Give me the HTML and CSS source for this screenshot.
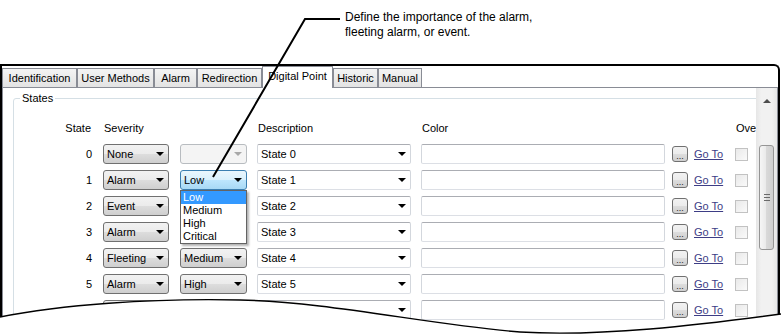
FILE: index.html
```html
<!DOCTYPE html>
<html>
<head>
    <title>Digital Point</title>
    <link rel="stylesheet" href="styles.css">
</head>
<body>
    <div class="callout">Define the importance of the alarm,<br>fleeting alarm, or event.</div>

    <div class="window">
        <div class="tabs">
            <div class="tab tab-ident">Identification</div>
            <div class="tab tab-user">User Methods</div>
            <div class="tab tab-alarm">Alarm</div>
            <div class="tab tab-redir">Redirection</div>
            <div class="tab tab-digital active">Digital Point</div>
            <div class="tab tab-historic">Historic</div>
            <div class="tab tab-manual">Manual</div>
        </div>
        <div class="panel">
            <div class="content">
                <fieldset class="group">
                    <legend>States</legend>
                    <div class="grid">
                        <div class="head num">State</div>
                        <div class="head">Severity</div>
                        <div></div>
                        <div class="head">Description</div>
                        <div class="head">Color</div>
                        <div></div>
                        <div></div>
                        <div class="head">Override</div>

                        <div class="num">0</div>
                        <div class="combo sev"><span>None</span><i class="arrow"></i></div>
                        <div class="combo pri disabled"><span></span><i class="arrow"></i></div>
                        <div class="combo desc"><span>State 0</span><i class="arrow"></i></div>
                        <div class="textbox"></div>
                        <div class="dots"><span>...</span></div>
                        <a class="link">Go To</a>
                        <span class="check"></span>

                        <div class="num">1</div>
                        <div class="combo sev"><span>Alarm</span><i class="arrow"></i></div>
                        <div class="pri-wrap">
                            <div class="combo pri focus"><span>Low</span><i class="arrow"></i></div>
                            <ul class="list">
                                <li class="selected">Low</li>
                                <li>Medium</li>
                                <li>High</li>
                                <li>Critical</li>
                            </ul>
                        </div>
                        <div class="combo desc"><span>State 1</span><i class="arrow"></i></div>
                        <div class="textbox"></div>
                        <div class="dots"><span>...</span></div>
                        <a class="link">Go To</a>
                        <span class="check"></span>

                        <!-- rows 2 and 3: priority boxes sit under the open list -->
                        <div class="num">2</div>
                        <div class="combo sev"><span>Event</span><i class="arrow"></i></div>
                        <div class="combo pri"></div>
                        <div class="combo desc"><span>State 2</span><i class="arrow"></i></div>
                        <div class="textbox"></div>
                        <div class="dots"><span>...</span></div>
                        <a class="link">Go To</a>
                        <span class="check"></span>

                        <div class="num">3</div>
                        <div class="combo sev"><span>Alarm</span><i class="arrow"></i></div>
                        <div class="combo pri"></div>
                        <div class="combo desc"><span>State 3</span><i class="arrow"></i></div>
                        <div class="textbox"></div>
                        <div class="dots"><span>...</span></div>
                        <a class="link">Go To</a>
                        <span class="check"></span>

                        <div class="num">4</div>
                        <div class="combo sev"><span>Fleeting</span><i class="arrow"></i></div>
                        <div class="combo pri"><span>Medium</span><i class="arrow"></i></div>
                        <div class="combo desc"><span>State 4</span><i class="arrow"></i></div>
                        <div class="textbox"></div>
                        <div class="dots"><span>...</span></div>
                        <a class="link">Go To</a>
                        <span class="check"></span>

                        <div class="num">5</div>
                        <div class="combo sev"><span>Alarm</span><i class="arrow"></i></div>
                        <div class="combo pri"><span>High</span><i class="arrow"></i></div>
                        <div class="combo desc"><span>State 5</span><i class="arrow"></i></div>
                        <div class="textbox"></div>
                        <div class="dots"><span>...</span></div>
                        <a class="link">Go To</a>
                        <span class="check"></span>

                        <div class="num">6</div>
                        <div class="combo sev"><span>Alarm</span><i class="arrow"></i></div>
                        <div class="combo pri"><span>Low</span><i class="arrow"></i></div>
                        <div class="combo desc"><span>State 6</span><i class="arrow"></i></div>
                        <div class="textbox"></div>
                        <div class="dots"><span>...</span></div>
                        <a class="link">Go To</a>
                        <span class="check"></span>
                    </div>
                </fieldset>
            </div>
            <div class="vscroll">
                <div class="up"><i></i></div>
                <div class="thumb"><i class="grip"></i></div>
            </div>
        </div>
    </div>

    <!-- callout line and torn bottom edge drawn over the screenshot -->
    <svg class="overlay" width="781" height="336" viewBox="0 0 781 336">
        <path d="M340,19 H305 L213,177" fill="none" stroke="#000" stroke-width="2"/>
        <path d="M0,317 C60,305 150,298 240,300 C330,302 430,325 520,332 C600,337 700,325 781,314 L781,336 L0,336 Z" fill="#fff"/>
        <path d="M0,317 C60,305 150,298 240,300 C330,302 430,325 520,332 C600,337 700,325 781,314" fill="none" stroke="#000" stroke-width="1.4"/>
    </svg>
</body>
</html>
```

FILE: styles.css
```css
body {
    margin: 0;
    width: 781px;
    height: 336px;
    position: relative;
    overflow: hidden;
    background: #fff;
    font-family: "Liberation Sans", Arial, sans-serif;
    font-size: 11px;
    color: #000;
}
.callout {
    height: 64px;
    box-sizing: border-box;
    padding: 10px 0 0 345px;
    font-size: 12px;
    line-height: 15px;
}
.window {
    width: 780px;
    height: 290px;
    box-sizing: border-box;
    border: 2px solid #000;
    border-bottom: none;
    border-top-right-radius: 6px;
    display: flex;
    flex-direction: column;
}
.tabs {
    display: flex;
    align-items: flex-end;
    height: 21px;
}
.tab {
    box-sizing: border-box;
    height: 19px;
    line-height: 18px;
    border: 1px solid #898c95;
    border-bottom: none;
    background: linear-gradient(#f4f4f4, #e3e3e3);
    text-align: center;
    white-space: nowrap;
}
.tab.active {
    height: 22px;
    line-height: 19px;
    margin-bottom: -1px;
    background: #fff;
    position: relative;
    z-index: 1;
}
.tab-ident { width: 75px; }
.tab-user { width: 77px; }
.tab-alarm { width: 43px; }
.tab-redir { width: 65px; }
.tab-digital { width: 71px; }
.tab-historic { width: 45px; }
.tab-manual { width: 44px; }
.panel {
    flex: 1;
    display: flex;
    border: 1px solid #898c95;
    background: #fff;
}
.content {
    flex: 1;
    min-width: 0;
    overflow: hidden;
    padding: 4px 0 0 10px;
}
.group {
    margin: 0;
    padding: 0;
    width: 800px;
    min-width: 0;
    height: 300px;
    box-sizing: border-box;
    border: 1px solid #d5dfe5;
    border-radius: 3px;
}
.group legend {
    margin-left: 6px;
    padding: 0 2px;
    line-height: 13px;
}
.grid {
    display: grid;
    grid-template-columns: 89px 77px 77px 164px 251px 22px 41px 60px;
    grid-auto-rows: 26px;
    align-items: center;
    margin-top: 10px;
    white-space: nowrap;
}
.head {
    padding-left: 1px;
}
.num {
    text-align: right;
    padding-right: 11px;
}
.head.num {
    padding-right: 12px;
}
.combo {
    box-sizing: border-box;
    height: 20px;
    display: flex;
    align-items: center;
    padding: 0 4px 0 3px;
    border: 1px solid #707070;
    border-radius: 3px;
    background: linear-gradient(#f2f2f2, #ebebeb 50%, #dddddd 50%, #cfcfcf);
}
.combo .arrow {
    margin-left: auto;
    border-style: solid;
    border-width: 4px 4px 0;
    border-color: #000 transparent transparent;
}
.sev { width: 66px; }
.pri { width: 67px; }
.combo.focus {
    border-color: #3c7fb1;
    background: linear-gradient(#eaf6fd, #d9f0fc 50%, #bee6fd 50%, #a7d9f5);
}
.combo.disabled {
    border-color: #b8bcc0;
    background: #f4f4f4;
}
.combo.disabled .arrow {
    border-top-color: #a8a8a8;
}
.combo.desc {
    width: 154px;
    border-radius: 2px;
    border-color: #abadb3 #d3d7dd #dcdfe5 #d3d7dd;
    background: #fff;
}
.pri-wrap {
    position: relative;
    height: 20px;
}
.list {
    position: absolute;
    top: 100%;
    left: 0;
    z-index: 2;
    width: 67px;
    box-sizing: border-box;
    margin: 0;
    padding: 0;
    list-style: none;
    border: 1px solid #646464;
    background: #fff;
    box-shadow: 2px 2px 2px rgba(0, 0, 0, 0.3);
}
.list li {
    height: 13px;
    line-height: 13px;
    padding-left: 2px;
}
.list li.selected {
    background: #3399ff;
    color: #fff;
}
.textbox {
    width: 244px;
    height: 20px;
    box-sizing: border-box;
    border: 1px solid;
    border-color: #abadb3 #d3d7dd #dcdfe5 #d3d7dd;
    border-radius: 2px;
}
.dots {
    width: 16px;
    height: 16px;
    box-sizing: border-box;
    border: 1px solid #707070;
    border-radius: 3px;
    background: linear-gradient(#f2f2f2, #ebebeb 50%, #dddddd 50%, #cfcfcf);
    display: flex;
    align-items: flex-end;
    justify-content: center;
    padding-bottom: 2px;
    font-size: 9px;
    line-height: 6px;
    color: #222;
}
.link {
    color: #3d3d85;
    text-decoration: underline;
}
.check {
    width: 13px;
    height: 13px;
    box-sizing: border-box;
    border: 1px solid #c2c2c2;
    background: linear-gradient(135deg, #e9e9e9, #fafafa);
}
.vscroll {
    width: 21px;
    display: flex;
    flex-direction: column;
    align-items: center;
    background: linear-gradient(to right, #e6e6e6, #f1f1f1 25%, #f1f1f1 75%, #e6e6e6);
}
.up {
    height: 26px;
    display: flex;
    align-items: center;
}
.up i {
    border-style: solid;
    border-width: 0 4px 4px;
    border-color: transparent transparent #4d4d4d;
}
.thumb {
    margin-top: 31px;
    width: 15px;
    height: 105px;
    box-sizing: border-box;
    border: 1px solid #959595;
    border-radius: 3px;
    background: linear-gradient(to right, #f6f6f6, #e9e9e9 50%, #d9d9d9 50%, #d0d0d0);
    display: flex;
    align-items: center;
    justify-content: center;
}
.grip {
    width: 6px;
    height: 7px;
    background: repeating-linear-gradient(#6a6a6a 0 1px, transparent 1px 3px);
}
.overlay {
    position: absolute;
    top: 0;
    left: 0;
    z-index: 5;
    pointer-events: none;
}
```
